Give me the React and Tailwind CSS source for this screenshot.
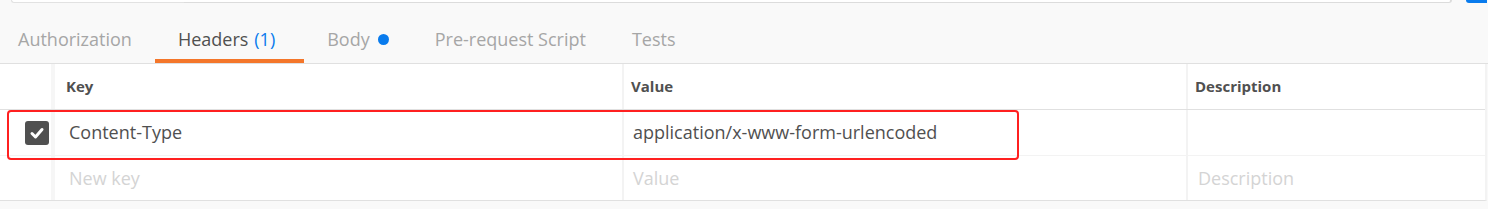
import React from 'react';

const tabs = [
    { label: 'Authorization' },
    { label: 'Headers', count: '(1)', active: true },
    { label: 'Body', dot: true },
    { label: 'Pre-request Script' },
    { label: 'Tests' },
];

const cols = 'grid grid-cols-[55px_567px_564px_1fr]';

const App = () => {
    return (
        <div className="relative w-[1488px] h-[209px] bg-[#f9f9f9] overflow-hidden" style={{ fontFamily: '"Open Sans", "Noto Sans", sans-serif' }}>
            {/* URL bar edge */}
            <div className="flex h-[3px]">
                <div className="ml-[11px] w-[173px] border-b border-l border-[#e2e2e2] rounded-bl-[4px] bg-white" />
                <div className="w-[1268px] border-b border-r-2 border-[#dcdcdc] rounded-br-[4px] bg-white" />
                <div className="ml-[14px] w-[21px] bg-[#097bed] rounded-bl-[4px]" />
            </div>

            {/* Tabs */}
            <div className="flex items-end h-[61px] border-b border-[#e0e0e0]">
                <div className="flex -ml-[5px]">
                    {tabs.map((tab) => (
                        <div
                            key={tab.label}
                            className={
                                'flex items-center h-[42px] pl-[23px] pb-[2px] text-[18px] border-b-4 ' +
                                (tab.active ? 'pr-[29px] border-[#f4762a] text-[#505050]' : 'pr-[23px] border-transparent text-[#a6a6a6]')
                            }
                        >
                            {tab.label}
                            {tab.count && <span className="ml-[6px] text-[#097bed]">{tab.count}</span>}
                            {tab.dot && <span className="ml-[8px] w-[11px] h-[11px] rounded-full bg-[#097bed]" />}
                        </div>
                    ))}
                </div>
            </div>

            {/* Table */}
            <div className="bg-white border-b border-[#e0e0e0] border-r-2 border-r-[#f3f3f3] mr-[1px]">
                <div className={cols + ' h-[46px] border-b border-[#e0e0e0] text-[15px] font-bold text-[#505050]'}>
                    <div className="border-r-4 border-[#f6f6f6]" />
                    <div className="flex items-center pl-[11px]">Key</div>
                    <div className="flex items-center pl-[7px] border-l-2 border-[#f3f3f3]">Value</div>
                    <div className="flex items-center pl-[7px] border-l-2 border-[#f3f3f3]">Description</div>
                </div>
                <div className={cols + ' h-[46px] border-b border-[#f3f3f3] text-[18px] text-[#505050]'}>
                    <div className="flex items-center justify-end pr-[2px] pt-[1px] border-r-4 border-[#f6f6f6]">
                        <span className="flex items-center justify-center w-[24px] h-[24px] rounded-[3px] bg-[#505050]">
                            <svg width="16" height="16" viewBox="0 0 16 16" fill="none">
                                <path d="M3 8.5 L6.5 12 L13 4.5" stroke="white" strokeWidth="3" strokeLinecap="round" strokeLinejoin="round" />
                            </svg>
                        </span>
                    </div>
                    <div className="flex items-center pl-[14px]">Content-Type</div>
                    <div className="flex items-center pl-[9px] border-l-2 border-[#f3f3f3]">application/x-www-form-urlencoded</div>
                    <div className="border-l-2 border-[#f3f3f3]" />
                </div>
                <div className={cols + ' h-[44px] text-[18px] text-[#d4d4d4]'}>
                    <div className="border-r-4 border-[#f6f6f6]" />
                    <div className="flex items-center pl-[14px]">New key</div>
                    <div className="flex items-center pl-[9px] border-l-2 border-[#f3f3f3]">Value</div>
                    <div className="flex items-center pl-[10px] border-l-2 border-[#f3f3f3]">Description</div>
                </div>
            </div>

            {/* Red annotation box */}
            <div className="absolute left-[7px] top-[110px] w-[1012px] h-[50px] border-2 border-[#ff2020] rounded-[4px]" />
        </div>
    );
};

export default App;
